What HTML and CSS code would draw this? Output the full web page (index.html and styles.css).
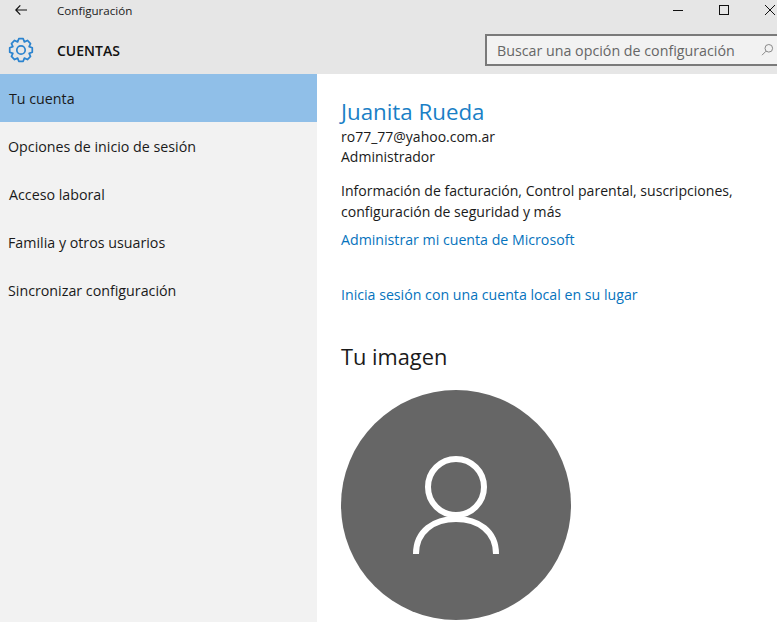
FILE: index.html
```html
<!DOCTYPE html>
<html lang="es">
<head>
<meta charset="utf-8">
<title>Configuración</title>
<link rel="stylesheet" href="styles.css">
</head>
<body>
<div class="app">
  <header class="header">
    <div class="titlebar">
      <svg class="back" width="12" height="10" viewBox="0 0 12 10"><path d="M12 5H.8M5.300 .4.800 5l4.500 4.600" fill="none" stroke="#111" stroke-width="1.200"/></svg>
      <span class="apptitle">Configuración</span>
      <div class="winbtns">
        <svg width="12" height="12" viewBox="0 0 12 12"><path d="M1 6.500h10" stroke="#111" stroke-width="1"/></svg>
        <svg width="12" height="12" viewBox="0 0 12 12"><rect x="1.500" y="1.500" width="9" height="9" fill="none" stroke="#111" stroke-width="1"/></svg>
        <svg width="12" height="12" viewBox="0 0 12 12"><path d="M1 1l10 10M11 1 1 11" stroke="#111" stroke-width="1"/></svg>
      </div>
    </div>
    <div class="headrow">
      <svg class="gear" width="26" height="26" viewBox="0 0 26 26"><g fill="none" stroke="#2a83cf" stroke-width="1.700" stroke-linejoin="round"><circle cx="13" cy="13" r="4.200"/><polygon points="24.290,10.810 24.290,15.190 21.130,16.370 22.530,19.430 19.430,22.530 16.370,21.130 15.190,24.290 10.810,24.290 9.630,21.130 6.570,22.530 3.470,19.430 4.870,16.370 1.710,15.190 1.710,10.810 4.870,9.630 3.470,6.570 6.570,3.470 9.630,4.870 10.810,1.710 15.190,1.710 16.370,4.870 19.430,3.470 22.530,6.570 21.130,9.630"/></g></svg>
      <h1 class="section">CUENTAS</h1>
      <div class="search">
        <span class="placeholder">Buscar una opción de configuración</span>
        <svg width="14" height="14" viewBox="0 0 14 14"><circle cx="8.800" cy="5.300" r="3.800" fill="none" stroke="#888" stroke-width="1"/><path d="M6 8.200 2 12.200" stroke="#888" stroke-width="1"/></svg>
      </div>
    </div>
  </header>
  <div class="body">
    <nav class="side">
      <a class="item indent selected">Tu cuenta</a>
      <a class="item">Opciones de inicio de sesión</a>
      <a class="item indent">Acceso laboral</a>
      <a class="item">Familia y otros usuarios</a>
      <a class="item">Sincronizar configuración</a>
    </nav>
    <main class="content">
      <h2 class="name">Juanita Rueda</h2>
      <p class="line">ro77_77@yahoo.com.ar</p>
      <p class="line">Administrador</p>
      <p class="info">Información de facturación, Control parental, suscripciones,<br>configuración de seguridad y más</p>
      <a class="link first">Administrar mi cuenta de Microsoft</a>
      <a class="link second">Inicia sesión con una cuenta local en su lugar</a>
      <h2 class="subhead">Tu imagen</h2>
      <div class="avatar">
        <svg width="230" height="230" viewBox="0 0 230 230"><circle cx="115" cy="115" r="115" fill="#666"/><g fill="none" stroke="#fff" stroke-width="6"><circle cx="115" cy="97" r="28"/><path d="M75 164c0-23 18-35 40-35s40 12 40 35"/></g></svg>
      </div>
    </main>
  </div>
</div>
</body>
</html>
```
FILE: styles.css
```css
* { box-sizing: border-box; }
html, body { margin: 0; padding: 0; }
body { font-family: "Open Sans", "Noto Sans", sans-serif; color: #1a1a1a; background: #fff; overflow: hidden; }
.app { width: 777px; height: 622px; display: flex; flex-direction: column; overflow: hidden; }
.header { height: 74px; background: #e6e6e6; flex: none; }
.titlebar { height: 20px; display: flex; align-items: center; padding-left: 15px; }
.back { flex: none; }
.apptitle { font-size: 11.6px; margin-left: 30px; }
.winbtns { margin-left: auto; display: flex; gap: 34px; margin-right: 1px; }
.headrow { height: 54px; display: flex; align-items: center; padding-left: 8px; padding-top: 6px; }
.gear { flex: none; }
.section { font-size: 14px; font-weight: 600; margin: 0 0 0 23px; color: #111; }
.search { margin-left: auto; width: 292px; height: 32px; border: 2px solid #7a7a7a; border-right: 0; background: #f2f2f2; display: flex; align-items: center; justify-content: space-between; padding: 0 3px 0 10px; }
.placeholder { font-size: 14.25px; color: #666; white-space: nowrap; }
.body { flex: 1; display: flex; min-height: 0; }
.side { width: 317px; background: #f2f2f2; flex: none; display: flex; flex-direction: column; }
.item { height: 48px; display: flex; align-items: center; padding-left: 8px; font-size: 14.25px; color: #1a1a1a; }
.indent { padding-left: 9px; }
.selected { background: #90bfe8; }
.content { flex: 1; padding: 22px 0 0 24px; }
.name { font-size: 22.3px; font-weight: 400; line-height: 31px; margin: 0; color: #1a7fc6; }
.line { font-size: 14px; line-height: 20px; margin: 0; }
.info { font-size: 14.07px; line-height: 21px; margin: 13px 0 0; white-space: nowrap; }
.link { display: block; font-size: 14.18px; line-height: 21px; color: #0673bd; white-space: nowrap; }
.first { margin-top: 7px; }
.second { margin-top: 34px; }
.subhead { font-size: 21.8px; font-weight: 400; line-height: 30px; margin: 37px 0 0; color: #1a1a1a; }
.avatar { margin-top: 18px; width: 230px; height: 230px; }
.avatar svg { display: block; }
```
